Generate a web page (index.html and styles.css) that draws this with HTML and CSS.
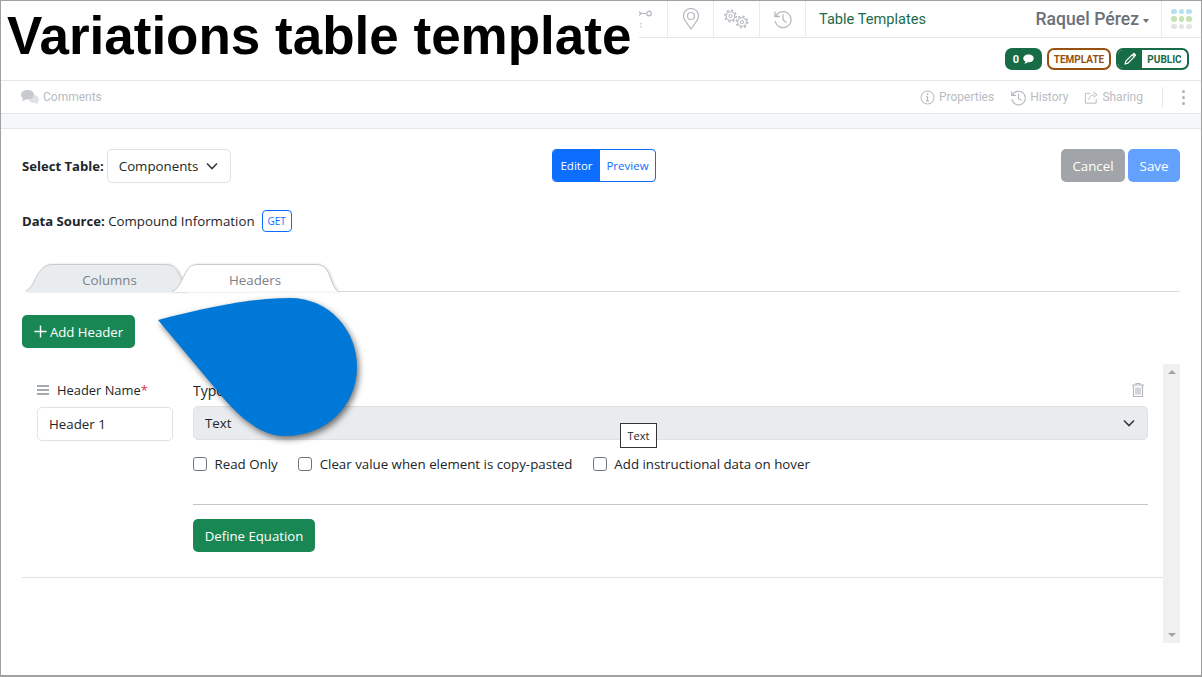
FILE: index.html
```html
<!DOCTYPE html>
<html lang="en">
<head>
    <meta charset="UTF-8">
    <meta name="viewport" content="width=device-width, initial-scale=1.0">
    <title>Variations table template</title>
    <link rel="stylesheet" href="styles.css">
</head>
<body>
<div class="frame">
    <div class="navbar">
        <div class="nav-icon"><svg width="24" height="24" viewBox="0 0 24 24" fill="none" stroke="#b4b9bf" stroke-width="1.200"><circle cx="16" cy="6.500" r="2.300"/><path d="M13.700 6.500H8L6 4.500M8 6.500L6 8.500M8 16v1.500M8 19v1.500"/></svg></div>
        <div class="nav-icon"><svg width="18" height="22" viewBox="0 0 18 22" fill="none" stroke="#b4b9bf" stroke-width="1.200"><path d="M9 21C5 15 1.500 12 1.500 8a7.500 7.500 0 0 1 15 0c0 4-3.500 7-7.500 13z"/><circle cx="9" cy="8" r="3.500"/></svg></div>
        <div class="nav-icon"><svg width="26" height="22" viewBox="0 0 26 22" fill="none" stroke="#b4b9bf"><circle cx="6.500" cy="8" r="4.300" stroke-width="1.100"/><circle cx="6.500" cy="8" r="5.700" stroke-width="1.500" stroke-dasharray="2 2.470"/><circle cx="6.500" cy="8" r="1.600"/><circle cx="18" cy="14" r="4.300" stroke-width="1.100"/><circle cx="18" cy="14" r="5.700" stroke-width="1.500" stroke-dasharray="2 2.470"/><circle cx="18" cy="14" r="1.600"/></svg></div>
        <div class="nav-icon"><svg width="20" height="20" viewBox="0 0 20 20" fill="none" stroke="#b4b9bf" stroke-width="1.300"><path d="M2 2.500v5h5M2.700 7.500a8 8 0 1 1-.5 4.500"/><path d="M10 5.500V11l3.500 2.500"/></svg></div>
        <div class="nav-title">Table Templates</div>
        <div class="nav-user">Raquel Pérez<span class="caret"></span></div>
        <div class="nav-apps">
            <span class="dot blue"></span><span class="dot blue"></span><span class="dot blue"></span>
            <span class="dot green"></span><span class="dot green"></span><span class="dot green"></span>
            <span class="dot grey"></span><span class="dot grey"></span><span class="dot grey"></span>
        </div>
    </div>

    <div class="badges">
        <span class="badge-count">0 <svg width="11" height="10" viewBox="0 0 11 10" fill="#fff"><path d="M5.500 0.500C8.500 0.500 10.700 2.200 10.700 4.400S8.500 8.300 5.500 8.300L4.600 8.250C3.800 9.100 2.600 9.500 1.400 9.500 2 8.900 2.400 8.200 2.500 7.500 1.100 6.800.3 5.700.3 4.400.3 2.200 2.500.5 5.500.5z"/></svg></span>
        <span class="badge-template">TEMPLATE</span>
        <span class="badge-public">
            <span class="pencil"><svg width="12" height="12" viewBox="0 0 11 11" fill="none" stroke="#fff" stroke-width="1.100"><path d="M1 10l.7-2.600L7.500 1.600l1.900 1.900-5.800 5.800z"/><path d="M8 1l.5-.3c.3-.2.6-.2.9 0l.9.900c.2.300.2.600 0 .9L10 3" fill="#fff"/></svg></span>
            <span class="public-label">PUBLIC</span>
        </span>
    </div>

    <div class="toolbar">
        <div class="tool">
            <svg width="20" height="16" viewBox="0 0 20 16"><path fill="#dfe2e5" d="M13 6c3 0 6 1.500 6 4.200 0 1.300-.7 2.200-1.600 2.900.1.800.6 1.500 1.100 2-1.300 0-2.400-.4-3.200-1.100-2.600.3-6.300-.8-6.300-3.800C9 8 10.500 6 13 6z"/><path fill="#c6cacf" d="M7.500 1c3.600 0 6.500 2 6.500 4.700s-2.900 4.700-6.500 4.700l-1.500-.1C5 11.300 3.300 11.800 1.500 11.800c.8-.7 1.400-1.700 1.500-2.600C1.800 8.300 1 7.100 1 5.700 1 3 3.900 1 7.500 1z"/></svg>
            Comments
        </div>
        <div class="tool-right">
            <div class="tool tool-info"><svg width="15" height="15" viewBox="0 0 15 15" fill="none" stroke="#b4b9bf"><circle cx="7.500" cy="7.500" r="6.500"/><path d="M7.500 6.500v4.500M6 11h3M6.300 6.500h1.200" stroke-width="1.200"/><circle cx="7.500" cy="4" r=".6"/></svg>Properties</div>
            <div class="tool"><svg width="17" height="17" viewBox="0 0 20 20" fill="none" stroke="#b4b9bf" stroke-width="1.300"><path d="M2 2.500v5h5M2.700 7.500a8 8 0 1 1-.5 4.500"/><path d="M10 5.500V11l3.500 2.500"/></svg>History</div>
            <div class="tool"><svg width="15" height="15" viewBox="0 0 16 15" fill="none" stroke="#b4b9bf"><path d="M7 3H1.500v10.500H13V9"/><path d="M5 10c.5-3.500 3-5.500 6.500-5.500M10 1.500l4 3-4 3"/></svg>Sharing</div>
            <div class="tool-sep"></div>
            <div class="kebab"><span></span><span></span><span></span></div>
        </div>
    </div>
    <div class="band"></div>

    <div class="main">
        <div class="table-row">
            <div class="select-table">
                <b>Select Table:</b>
                <div class="select-box">Components<svg class="chev" width="12" height="8" viewBox="0 0 12 8" fill="none" stroke="#343a40" stroke-width="1.600"><path d="M1 1.500l5 5 5-5"/></svg></div>
            </div>
            <div class="switch">
                <span class="switch-on">Editor</span><span class="switch-off">Preview</span>
            </div>
            <div class="actions">
                <button class="btn-cancel">Cancel</button>
                <button class="btn-save">Save</button>
            </div>
        </div>

        <div class="source-row">
            <b>Data Source:</b>&nbsp;Compound Information
            <span class="get">GET</span>
        </div>

        <div class="tabs">
            <div class="tab tab-back">
                <svg width="163" height="28" viewBox="0 0 163 28"><path d="M0 27.500C8 25 10 12 16 6 19 2 23 .5 28 .5H140c7 0 10 2.500 13 7.500l10 19.500z" fill="#e9ecef" stroke="#c8cacc"/><path d="M0 27.500h163" stroke="#e9ecef"/></svg>
                <span>Columns</span>
            </div>
            <div class="tab tab-front">
                <svg width="166" height="28" viewBox="0 0 166 28"><path d="M0 28C5 26 8 20 11 14l4-8C18 2 21 .5 26 .5H144c6 0 9 2.500 12 7.500 3 6 5 16 10 19.500" fill="#fff" stroke="#c8cacc"/></svg>
                <span>Headers</span>
            </div>
            <div class="tab-line"></div>
        </div>

        <button class="btn-green btn-add"><svg width="13" height="13" viewBox="0 0 13 13" stroke="#fff" stroke-width="1.400"><path d="M6.500 0.500v12M.5 6.500h12"/></svg>Add Header</button>

        <div class="scroll-area">
            <div class="scroll-content">
                <div class="header-row">
                    <div class="name-col">
                        <div class="label">
                            <span class="handle"><i></i><i></i><i></i></span>
                            <span>Header Name<em>*</em></span>
                        </div>
                        <div class="name-input">Header 1</div>
                    </div>
                    <div class="type-col">
                        <div class="type-head">
                            <span class="type-label">Type</span>
                            <svg width="14" height="16" viewBox="0 0 14 16" fill="none" stroke="#b4b9bf" stroke-width="1.200"><path d="M1 3h12M5 3V1.500h4V3M2.500 3v11.500h9V3"/><path d="M5 5.500v7M7 5.500v7M9 5.500v7"/></svg>
                        </div>
                        <div class="type-select">Text<svg width="12" height="8" viewBox="0 0 12 8" fill="none" stroke="#343a40" stroke-width="1.600"><path d="M1 1.500l5 5 5-5"/></svg></div>
                        <div class="checks">
                            <label class="check"><span class="box"></span>Read Only</label>
                            <label class="check"><span class="box"></span>Clear value when element is copy-pasted</label>
                            <label class="check"><span class="box"></span>Add instructional data on hover</label>
                        </div>
                        <div class="type-rule"></div>
                        <button class="btn-green btn-eq">Define Equation</button>
                    </div>
                </div>
            </div>
            <div class="scrollbar">
                <span class="arrow-up"></span>
                <span class="arrow-down"></span>
            </div>
        </div>
    </div>
</div>

<!-- annotation layer sits over the app -->
<h1 class="page-title">Variations table template</h1>
<svg class="callout" width="206" height="150" viewBox="0 0 206 150">
    <path d="M1 23C50 10 95 1 133 1 172 1 200 33 200 70 200 108 170 139 128 139 105 139 85 122 68 103z" fill="#0078d7"/>
</svg>
<div class="tooltip">Text</div>
</body>
</html>
```

FILE: styles.css
```css
* {
    box-sizing: border-box;
}
html, body {
    margin: 0;
    height: 100%;
}
body {
    position: relative;
    width: 1202px;
    height: 677px;
    overflow: hidden;
    background: #fff;
    font-family: "Open Sans", "Noto Sans", sans-serif;
    font-size: 13.300px;
    color: #212529;
}
b {
    font-size: 13.100px;
}
button {
    font-family: inherit;
    border: 0;
    cursor: pointer;
}
.frame {
    height: 677px;
    border: 1px solid #a0a0a0;
    border-bottom-width: 2px;
    display: flex;
    flex-direction: column;
}

/* top nav */
.navbar {
    height: 37px;
    flex: none;
    display: flex;
    align-items: stretch;
    padding-left: 621px;
    border-bottom: 1px solid #e4e6e9;
}
.nav-icon {
    width: 46px;
    display: flex;
    align-items: center;
    justify-content: center;
    border-right: 1px solid #e9ebed;
}
.nav-title {
    padding-left: 13px;
    align-self: center;
    font-family: "Roboto", sans-serif;
    font-size: 14.600px;
    color: #1d6b4a;
}
.nav-user {
    margin-left: auto;
    align-self: center;
    font-family: "Roboto", sans-serif;
    font-size: 17.600px;
    font-weight: 500;
    color: #6b7178;
    padding-right: 12px;
}
.caret {
    display: inline-block;
    margin-left: 4px;
    vertical-align: 2px;
    border-top: 4px solid #6b7178;
    border-left: 3.500px solid transparent;
    border-right: 3.500px solid transparent;
}
.nav-apps {
    width: 40px;
    border-left: 1px solid #e9ebed;
    display: grid;
    grid-template-columns: repeat(3, 5.500px);
    grid-auto-rows: 5.500px;
    gap: 2px;
    align-content: center;
    justify-content: center;
}
.dot {
    border-radius: 50%;
}
.dot.blue { background: #b5e0f0; }
.dot.green { background: #c8e2b8; }
.dot.grey { background: #e2e4e6; }

/* badges row */
.badges {
    height: 43px;
    flex: none;
    display: flex;
    align-items: center;
    justify-content: flex-end;
    gap: 5px;
    padding-right: 12px;
    border-bottom: 1px solid #e4e6e9;
    font-family: "Roboto", sans-serif;
    font-size: 10px;
    font-weight: 700;
}
.badge-count {
    width: 37px;
    height: 22px;
    border-radius: 7px;
    background: #176b45;
    color: #fff;
    font-size: 11px;
    display: flex;
    align-items: center;
    justify-content: center;
    gap: 4px;
}
.badge-template {
    width: 64px;
    height: 22px;
    border: 2px solid #97500f;
    border-radius: 7px;
    color: #97500f;
    display: flex;
    align-items: center;
    justify-content: center;
}
.badge-public {
    width: 73px;
    height: 22px;
    border: 2px solid #176b45;
    border-radius: 7px;
    color: #176b45;
    display: flex;
    overflow: hidden;
}
.pencil {
    width: 24px;
    background: #176b45;
    display: flex;
    align-items: center;
    justify-content: center;
}
.public-label {
    flex: 1;
    text-align: center;
    line-height: 20px;
}

/* secondary toolbar */
.toolbar {
    height: 33px;
    flex: none;
    display: flex;
    align-items: center;
    justify-content: space-between;
    padding: 0 3px 0 19px;
    border-bottom: 1px solid #e4e6e9;
    font-family: "Roboto", sans-serif;
    font-size: 12px;
    color: #b8bcc2;
}
.tool {
    display: flex;
    align-items: center;
    gap: 3px;
}
.tool-info {
    gap: 4px;
}
.tool-right {
    display: flex;
    align-items: center;
    gap: 16px;
}
.tool-sep {
    width: 1px;
    height: 20px;
    background: #e4e6e9;
    margin-left: 3px;
}
.kebab {
    width: 30px;
    display: flex;
    flex-direction: column;
    align-items: center;
    gap: 3px;
    margin-left: -11px;
}
.kebab span {
    width: 3px;
    height: 3px;
    background: #aeb3b8;
    border-radius: 50%;
}
.band {
    height: 15px;
    flex: none;
    background: #f6f7f9;
    border-bottom: 1px solid #e4e6e9;
}

/* main panel */
.main {
    flex: 1;
    padding: 20px 21px 0;
    display: flex;
    flex-direction: column;
}
.table-row {
    display: grid;
    grid-template-columns: 530px auto 1fr;
    align-items: start;
    height: 34px;
}
.select-table {
    display: flex;
    align-items: center;
    gap: 3px;
}
.select-box {
    width: 124px;
    height: 34px;
    display: flex;
    align-items: center;
    justify-content: space-between;
    padding: 0 12px 0 11px;
    border: 1px solid #dee2e6;
    border-radius: 5px;
}
.switch {
    display: flex;
    height: 33px;
    border: 1px solid #0d6efd;
    border-radius: 4px;
    overflow: hidden;
    font-size: 11.500px;
}
.switch span {
    display: flex;
    align-items: center;
    justify-content: center;
}
.switch-on {
    width: 47px;
    background: #0d6efd;
    color: #fff;
}
.switch-off {
    width: 55px;
    color: #0d6efd;
}
.actions {
    display: flex;
    justify-content: flex-end;
    gap: 3px;
}
.actions button {
    height: 33px;
    border-radius: 5px;
    color: #fff;
    font-size: 13.300px;
}
.btn-cancel {
    width: 64px;
    background: #a1a5a9;
}
.btn-save {
    width: 52px;
    background: #62a1fe;
}
.source-row {
    margin-top: 27px;
    height: 22px;
    display: flex;
    align-items: center;
}
.get {
    margin-left: 7px;
    width: 30px;
    height: 22px;
    border: 1px solid #0d6efd;
    border-radius: 4px;
    color: #0d6efd;
    font-size: 10px;
    display: flex;
    align-items: center;
    justify-content: center;
}

/* tabs */
.tabs {
    margin-top: 32px;
    height: 28px;
    flex: none;
    display: flex;
    padding-left: 3px;
}
.tab {
    position: relative;
    height: 28px;
    flex: none;
    display: flex;
    align-items: center;
    justify-content: center;
    color: #7b8188;
    padding-top: 4px;
}
.tab svg {
    position: absolute;
    left: 0;
    top: 0;
    filter: drop-shadow(1px 0 1px rgba(0, 0, 0, 0.15));
}
.tab span {
    position: relative;
}
.tab-back {
    width: 163px;
    padding-left: 6px;
}
.tab-front {
    width: 166px;
    margin-left: -16px;
}
.tab-line {
    flex: 1;
    border-bottom: 1px solid #d8dadd;
}

.btn-green {
    background: #198754;
    color: #fff;
    border-radius: 5px;
    font-size: 13.200px;
    height: 33px;
}
.btn-add {
    align-self: flex-start;
    margin-top: 23px;
    width: 113px;
    padding: 0;
    display: flex;
    align-items: center;
    justify-content: center;
    gap: 3px;
}

/* scrolling header list */
.scroll-area {
    margin-top: 16px;
    height: 279px;
    flex: none;
    display: flex;
}
.scroll-content {
    flex: 1;
}
.header-row {
    height: 214px;
    display: flex;
    gap: 20px;
    padding: 16px 15px 0;
    border-bottom: 1px solid #dfe1e3;
}
.name-col {
    width: 136px;
    flex: none;
}
.label {
    display: flex;
    align-items: center;
    gap: 8px;
    height: 20px;
    font-size: 12.900px;
}
.label em {
    color: #dc3545;
    font-style: normal;
}
.handle {
    display: flex;
    flex-direction: column;
    gap: 2px;
}
.handle i {
    width: 12px;
    height: 2px;
    background: #a4a9ae;
}
.name-input {
    margin-top: 7px;
    height: 34px;
    display: flex;
    align-items: center;
    padding-left: 11px;
    border: 1px solid #dee2e6;
    border-radius: 5px;
}
.type-col {
    flex: 1;
}
.type-head {
    display: flex;
    justify-content: space-between;
    align-items: center;
    height: 20px;
    padding-right: 3px;
}
.type-label {
    font-size: 14px;
}
.type-select {
    margin-top: 6px;
    height: 34px;
    display: flex;
    align-items: center;
    justify-content: space-between;
    padding: 0 12px 0 11px;
    background: #e9ecef;
    border: 1px solid #dee2e6;
    border-radius: 5px;
}
.checks {
    display: flex;
    gap: 20.500px;
    margin-top: 14px;
    height: 20px;
    align-items: center;
}
.check {
    display: flex;
    align-items: center;
    gap: 7.500px;
}
.box {
    width: 14px;
    height: 14px;
    border: 1px solid #6c757d;
    border-radius: 3px;
}
.type-rule {
    margin-top: 30px;
    border-top: 1px solid #c4c6c8;
}
.btn-eq {
    margin-top: 14px;
    width: 122px;
    display: block;
    padding: 0;
}
.scrollbar {
    width: 17px;
    flex: none;
    background: #f0f0f0;
    display: flex;
    flex-direction: column;
    justify-content: space-between;
    align-items: center;
    padding: 6px 0;
}
.arrow-up {
    border-bottom: 4px solid #a3a3a3;
    border-left: 4px solid transparent;
    border-right: 4px solid transparent;
}
.arrow-down {
    border-top: 4px solid #a3a3a3;
    border-left: 4px solid transparent;
    border-right: 4px solid transparent;
}

/* annotation overlays */
.page-title {
    position: absolute;
    left: 1px;
    top: 1px;
    margin: 0;
    width: 638px;
    height: 62px;
    padding-left: 6px;
    background: #fff;
    color: #000;
    font-family: "Liberation Sans", Arial, sans-serif;
    font-size: 53px;
    font-weight: 700;
    line-height: 70px;
    white-space: nowrap;
}
.callout {
    position: absolute;
    left: 157px;
    top: 297px;
    filter: drop-shadow(2px 3px 3px rgba(0, 0, 0, 0.55));
}
.tooltip {
    position: absolute;
    left: 620px;
    top: 423px;
    width: 37px;
    height: 25px;
    border: 1px solid #333;
    background: #fff;
    font-size: 11px;
    display: flex;
    align-items: center;
    justify-content: center;
}
```
